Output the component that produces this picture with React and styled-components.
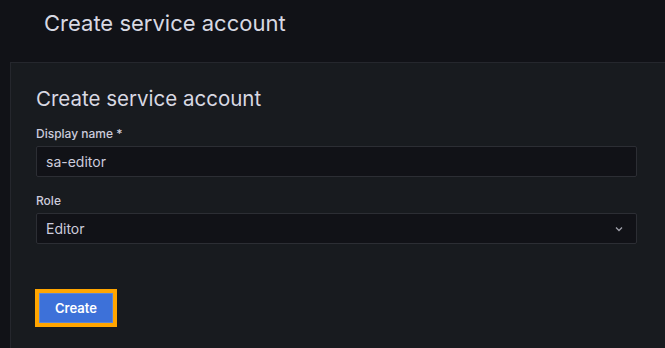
import React from "react";
import styled, { createGlobalStyle } from "styled-components";

const GlobalStyle = createGlobalStyle`
  html, body {
    margin: 0;
    padding: 0;
    background: #111217;
    font-family: Inter, "Noto Sans", sans-serif;
    color: #ccccdc;
  }
  * { box-sizing: border-box; }
`;

const Page = styled.div`
  width: 665px;
  height: 348px;
  overflow: hidden;
  background: #111217;
  padding: 0 0 0 10px;
`;

const PageTitle = styled.h1`
  margin: 0;
  height: 62px;
  padding: 8px 0 0 34px;
  font-size: 22px;
  font-weight: 400;
  line-height: 30px;
  color: #d8d9e3;
`;

const Panel = styled.div`
  background: #181b1f;
  border: 1px solid #25272d;
  border-right: none;
  border-bottom: none;
  height: 286px;
  padding: 22px 28px 0 25px;
`;

const PanelTitle = styled.h2`
  margin: 0 0 13px;
  font-size: 20.5px;
  font-weight: 400;
  line-height: 28px;
  color: #d8d9e3;
`;

const Field = styled.div`
  display: flex;
  flex-direction: column;
  margin-bottom: ${(p) => p.$gap || 16}px;
`;

const Label = styled.label`
  font-size: 12px;
  font-weight: 500;
  line-height: 16px;
  color: #ccccdc;
  margin-bottom: 4px;
`;

const Box = styled.div`
  height: 31px;
  display: flex;
  align-items: center;
  justify-content: space-between;
  background: #111217;
  border: 1px solid #2c2e34;
  border-radius: 2px;
  padding: 0 9px;
  font-size: 14px;
  color: #ccccdc;
`;

const Chevron = styled.svg`
  width: 10px;
  height: 10px;
  margin-right: 3px;
  color: #9fa0aa;
`;

const ButtonWrap = styled.div`
  display: flex;
  width: fit-content;
  margin-top: 45px;
  margin-left: -1px;
  border: 4px solid #ffa500;
`;

const Button = styled.button`
  height: 30px;
  padding: 0 15px;
  background: #3d71d9;
  border: 1px solid #5f86d2;
  border-radius: 0;
  color: #ffffff;
  font-family: Inter, "Noto Sans", sans-serif;
  font-size: 13px;
  font-weight: 600;
  cursor: pointer;
`;

export default function App() {
  return (
    <>
      <GlobalStyle />
      <Page>
        <PageTitle>Create service account</PageTitle>
        <Panel>
          <PanelTitle>Create service account</PanelTitle>
          <Field>
            <Label>Display name *</Label>
            <Box>sa-editor</Box>
          </Field>
          <Field $gap={0}>
            <Label>Role</Label>
            <Box>
              Editor
              <Chevron viewBox="0 0 10 10" fill="none">
                <path d="M2 3.5 L5 6.5 L8 3.5" stroke="currentColor" strokeWidth="1.3" />
              </Chevron>
            </Box>
          </Field>
          <ButtonWrap>
            <Button>Create</Button>
          </ButtonWrap>
        </Panel>
      </Page>
    </>
  );
}
